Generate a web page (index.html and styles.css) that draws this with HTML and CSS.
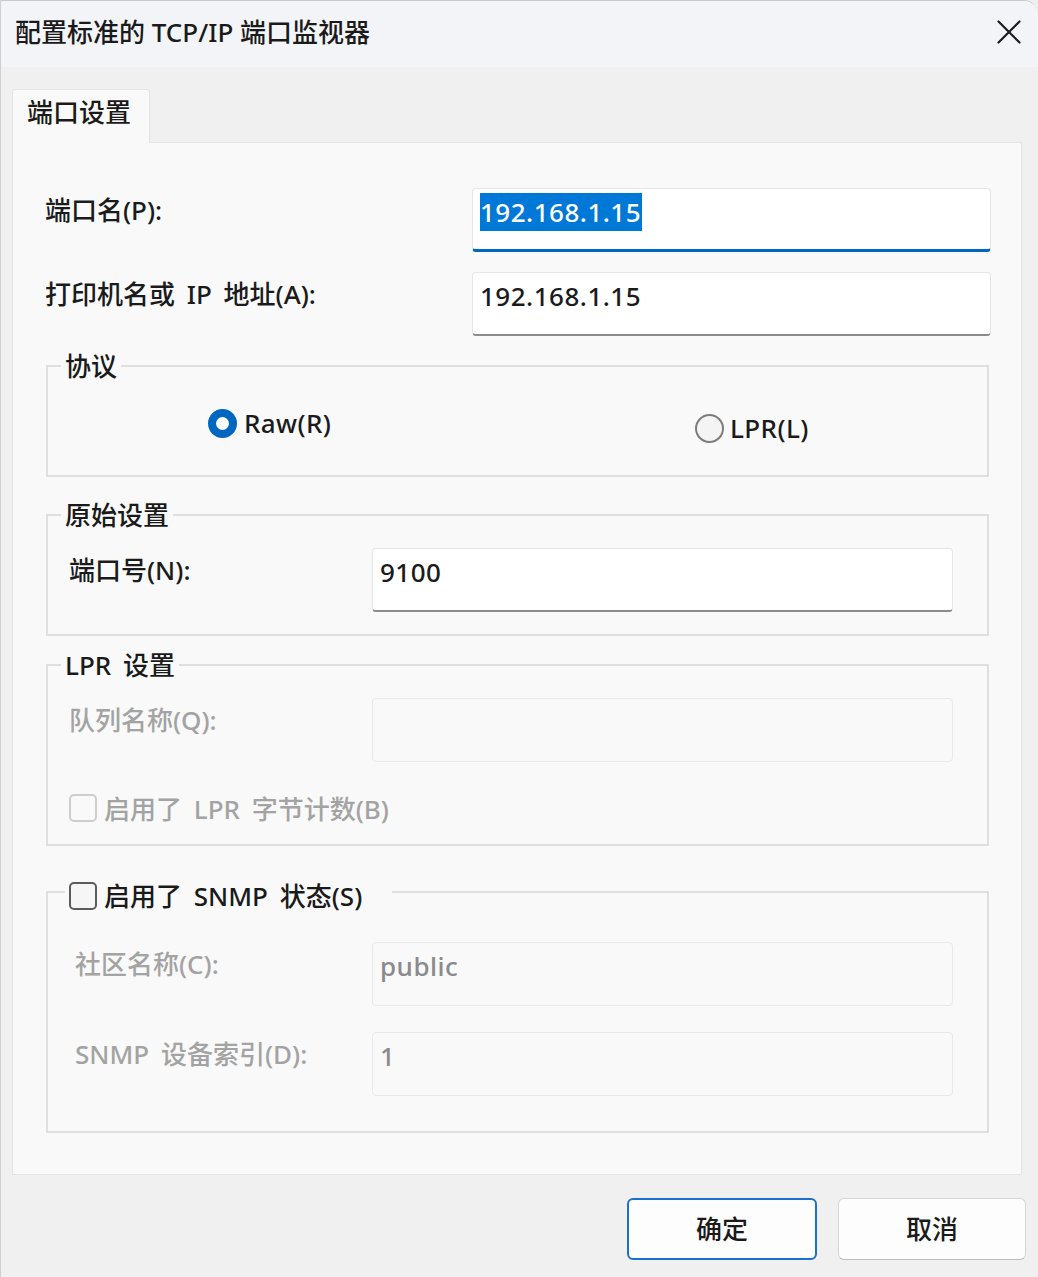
FILE: index.html
```html
<!DOCTYPE html>
<html lang="zh-CN">
<head>
<meta charset="utf-8">
<title>配置标准的 TCP/IP 端口监视器</title>
<link rel="stylesheet" href="styles.css">
</head>
<body>
<div class="window">
  <div class="titlebar">
    <span class="title">配置标准的 TCP/IP 端口监视器</span>
    <svg class="close" width="24" height="24" viewBox="0 0 24 24" aria-hidden="true">
      <path d="M1.5 1.5 L22.5 22.5 M22.5 1.5 L1.5 22.5" stroke="#1c1c1c" stroke-width="2.2" fill="none" stroke-linecap="round"/>
    </svg>
  </div>
  <div class="client">
    <div class="tabs"><div class="tab">端口设置</div></div>
    <div class="panel">
      <div class="row top-row">
        <span class="label">端口名(P):</span>
        <div class="field wide active"><span class="sel">192.168.1.15</span></div>
      </div>
      <div class="row top-row second">
        <span class="label">打印机名或 IP 地址(A):</span>
        <div class="field wide">192.168.1.15</div>
      </div>

      <fieldset class="group g-proto">
        <legend class="legend">协议</legend>
        <div class="radios">
          <div class="radio"><span class="dot on"></span><span>Raw(R)</span></div>
          <div class="radio lpr"><span class="dot"></span><span>LPR(L)</span></div>
        </div>
      </fieldset>

      <fieldset class="group g-raw">
        <legend class="legend">原始设置</legend>
        <div class="row grow">
          <span class="label">端口号(N):</span>
          <div class="field">9100</div>
        </div>
      </fieldset>

      <fieldset class="group g-lpr">
        <legend class="legend">LPR 设置</legend>
        <div class="row grow">
          <span class="label disabled">队列名称(Q):</span>
          <div class="field off"></div>
        </div>
        <div class="check-row">
          <span class="box off"></span><span class="disabled">启用了 LPR 字节计数(B)</span>
        </div>
      </fieldset>

      <fieldset class="group g-snmp">
        <legend class="legend check-legend"><span class="box"></span><span>启用了 SNMP 状态(S)</span></legend>
        <div class="row grow first">
          <span class="label disabled">社区名称(C):</span>
          <div class="field off">public</div>
        </div>
        <div class="row grow second">
          <span class="label disabled">SNMP 设备索引(D):</span>
          <div class="field off">1</div>
        </div>
      </fieldset>
    </div>
    <div class="buttons">
      <button class="btn primary" type="button">确定</button>
      <button class="btn" type="button">取消</button>
    </div>
  </div>
</div>
</body>
</html>
```

FILE: styles.css
```css
* { box-sizing: border-box; }

html, body {
  margin: 0;
  padding: 0;
  background: #f0f0f0;
}

body {
  font-family: "Noto Sans", "Noto Sans CJK SC", sans-serif;
  font-size: 26px;
  font-weight: 500;
  word-spacing: 5px;
  color: #1b1b1b;
  width: 1038px;
  height: 1277px;
  overflow: hidden;
}

.window {
  height: 1277px;
  border-top: 1px solid #c9c9c9;
  border-left: 1px solid #cfcfcf;
  border-top-right-radius: 14px;
  background: #f0f0f0;
  overflow: hidden;
}

.titlebar {
  height: 66px;
  background: #f3f4f8;
  display: flex;
  align-items: center;
  justify-content: space-between;
  padding: 0 17px 4px 14px;
}

.title {
  font-size: 26px;
  line-height: 34px;
  word-spacing: 0;
  color: #1a1a1a;
}

.close {
  display: block;
}

.client {
  padding: 22px 16px 0 11px;
}

.tabs {
  display: flex;
  position: relative;
  z-index: 1;
}

.tab {
  width: 138px;
  height: 54px;
  margin-bottom: -1px;
  background: #f9f9f9;
  border: 1px solid #e4e4e4;
  border-bottom: none;
  border-radius: 3px 3px 0 0;
  padding: 5px 0 0 14px;
  line-height: 34px;
  color: #1a1a1a;
}

.panel {
  height: 1033px;
  background: #f9f9f9;
  border: 1px solid #e4e4e4;
  padding: 45px 32px 0 33px;
}

.row {
  display: flex;
  justify-content: space-between;
  align-items: flex-start;
}

.top-row {
  margin-left: -1px;
  margin-right: -2px;
}

.top-row.second {
  margin-top: 20px;
}

.label {
  padding-top: 5px;
  line-height: 34px;
  white-space: nowrap;
}

.disabled {
  color: #a3a3a3;
}

.field {
  width: 581px;
  height: 64px;
  background: #ffffff;
  border: 1px solid #e6e6e6;
  border-bottom: 2px solid #8c8c8c;
  border-radius: 4px;
  padding: 6px 7px 0;
  line-height: 34px;
  letter-spacing: 0.5px;
  color: #1b1b1b;
}

.field.wide {
  width: 519px;
}

.field.active {
  border-bottom: 3px solid #0067c0;
  padding-top: 4px;
}

.sel {
  display: inline-block;
  background: #0078d7;
  color: #ffffff;
  line-height: 38px;
  padding-right: 1px;
}

.field.off {
  background: #f9f9f9;
  border: 1px solid #e8e8e8;
  color: #8a8a8a;
}

.group {
  margin: 0;
  padding: 0;
  min-width: 0;
  border: 2px solid #dfdfdf;
}

.legend {
  margin-left: 13px;
  padding: 0 4px;
  line-height: 34px;
  color: #1a1a1a;
}

.g-proto {
  margin-top: 13px;
  padding-bottom: 30px;
}

.radios {
  display: grid;
  grid-template-columns: 487px auto;
  padding-left: 160px;
  margin-top: 23px;
  letter-spacing: 0.4px;
}

.radio {
  display: flex;
  align-items: center;
  gap: 7px;
  height: 34px;
}

.radio.lpr {
  margin-top: 5px;
  gap: 6px;
}

.dot {
  width: 29px;
  height: 29px;
  border-radius: 50%;
  border: 2px solid #7c7c7c;
  background: #f4f4f4;
  flex: none;
}

.dot.on {
  border: 8px solid #0067c0;
  background: #ffffff;
}

.grow {
  padding: 0 34px 0 21px;
  margin-top: 16px;
}

.g-raw {
  margin-top: 21px;
  padding-bottom: 22px;
}

.g-lpr {
  margin-top: 12px;
  padding-bottom: 19px;
}

.check-row {
  display: flex;
  align-items: center;
  gap: 7px;
  height: 34px;
  margin-top: 29px;
  padding-left: 21px;
}

.box {
  width: 28px;
  height: 28px;
  flex: none;
  border: 2px solid #5c5c5c;
  border-radius: 5px;
  background: #f6f6f6;
}

.box.off {
  border-color: #cdcdcd;
  background: #f9f9f9;
}

.g-snmp {
  margin-top: 25px;
  padding-bottom: 35px;
}

.check-legend {
  display: flex;
  align-items: center;
  gap: 7px;
  margin-left: 17px;
  padding: 8px 30px 0 4px;
  height: 42px;
}

.g-snmp .grow {
  padding-left: 27px;
}

.g-snmp .grow.first {
  margin-top: 29px;
}

.g-snmp .grow.second {
  margin-top: 26px;
}

.buttons {
  display: flex;
  justify-content: flex-end;
  gap: 21px;
  margin-top: 23px;
  margin-right: -4px;
}

.btn {
  font-family: inherit;
  font-size: 26px;
  font-weight: 500;
  color: #1a1a1a;
  width: 188px;
  height: 62px;
  background: #fdfdfd;
  border: 1px solid #d6d6d6;
  border-bottom-color: #bcbcbc;
  border-radius: 6px;
  padding: 0;
  line-height: 34px;
}

.btn.primary {
  width: 190px;
  border: 2px solid #1a6fcf;
}
```
